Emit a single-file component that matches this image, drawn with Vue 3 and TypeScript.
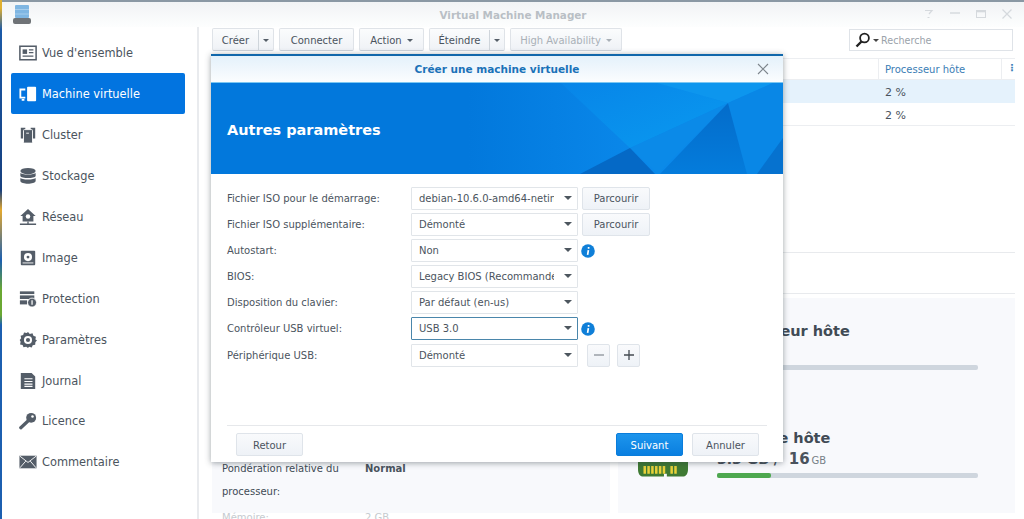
<script setup lang="ts">
const nav = [
  { label: "Vue d'ensemble", icon: 'overview' },
  { label: 'Machine virtuelle', icon: 'vm', active: true },
  { label: 'Cluster', icon: 'cluster' },
  { label: 'Stockage', icon: 'storage' },
  { label: 'Réseau', icon: 'network' },
  { label: 'Image', icon: 'image' },
  { label: 'Protection', icon: 'protection' },
  { label: 'Paramètres', icon: 'settings' },
  { label: 'Journal', icon: 'log' },
  { label: 'Licence', icon: 'license' },
  { label: 'Commentaire', icon: 'feedback' },
]
const fields = [
  { label: 'Fichier ISO pour le démarrage:', value: 'debian-10.6.0-amd64-netinst.iso', extra: 'browse' },
  { label: 'Fichier ISO supplémentaire:', value: 'Démonté', extra: 'browse' },
  { label: 'Autostart:', value: 'Non', extra: 'info' },
  { label: 'BIOS:', value: 'Legacy BIOS (Recommandé)', extra: '' },
  { label: 'Disposition du clavier:', value: 'Par défaut (en-us)', extra: '' },
  { label: 'Contrôleur USB virtuel:', value: 'USB 3.0', extra: 'info', focus: true },
  { label: 'Périphérique USB:', value: 'Démonté', extra: 'pm' },
]
</script>

<template>
  <div class="desk">
    <div class="wall"></div>
    <div class="win">
      <header class="titlebar">
        <svg class="appicon" width="20" height="20" viewBox="0 0 20 20">
          <rect x="3" y="0" width="14" height="13" rx="1" fill="#7fb6e2" />
          <path d="M3 4.5h14M3 9h14" stroke="#a6cdec" />
          <rect x="1" y="13" width="18" height="6" rx="2" fill="#6f7377" />
        </svg>
        <span class="wintitle">Virtual Machine Manager</span>
        <div class="winbtns">
          <svg width="12" height="12" viewBox="0 0 12 12"><path d="M2 2.5h7l-3 3.5M4.5 9.5h2" fill="none" stroke="#d5d9dd" stroke-width="1.2" /></svg>
          <svg width="12" height="12" viewBox="0 0 12 12"><path d="M1 5h10" stroke="#d5d9dd" stroke-width="1.4" /></svg>
          <svg width="12" height="12" viewBox="0 0 12 12"><rect x="1.5" y="2.5" width="9" height="7" fill="none" stroke="#d5d9dd" /><path d="M1.5 3.5h9" stroke="#d5d9dd" stroke-width="1.6" /></svg>
          <svg width="12" height="12" viewBox="0 0 12 12"><path d="M1.5 1.5l9 9M10.5 1.5l-9 9" stroke="#d5d9dd" stroke-width="1.2" /></svg>
        </div>
      </header>
      <div class="body">
        <aside class="side">
          <div v-for="n in nav" :key="n.label" class="navitem" :class="{ active: n.active }">
            <svg class="navicon" width="18" height="18" viewBox="0 0 20 20">
              <g v-if="n.icon === 'overview'">
                <rect x="1" y="2.5" width="18" height="15" fill="none" stroke="currentColor" stroke-width="1.7" />
                <rect x="4" y="6" width="5" height="5" fill="currentColor" />
                <path d="M11 6.5h5M11 9.5h5M4 13.5h12" stroke="currentColor" stroke-width="1.5" />
              </g>
              <g v-else-if="n.icon === 'vm'">
                <rect x="9" y="2" width="10" height="16" rx="1" fill="currentColor" />
                <path d="M7 5H1.5v9H7M3 16.5h3" fill="none" stroke="currentColor" stroke-width="2" />
              </g>
              <g v-else-if="n.icon === 'cluster'">
                <path d="M2 2h5v12H2zM13 2h5v12h-5z" fill="currentColor" />
                <rect x="5" y="4" width="10" height="15" rx="1" fill="currentColor" stroke="#fff" />
                <path d="M8 8h3" stroke="#fff" />
              </g>
              <g v-else-if="n.icon === 'storage'" fill="currentColor">
                <ellipse cx="10" cy="4.5" rx="8.5" ry="3.5" />
                <path d="M1.5 6.5c1 2.6 16 2.6 17 0v3.5c-1 3-16 3-17 0zM1.5 12c1 2.6 16 2.6 17 0v3.5c-1 4-16 4-17 0z" />
              </g>
              <g v-else-if="n.icon === 'network'">
                <path d="M10 1L1.5 9H4v6h12V9h2.5z" fill="currentColor" />
                <circle cx="10" cy="9.5" r="2.5" fill="#fff" />
                <path d="M1 18h18M10 15v3" stroke="currentColor" stroke-width="1.5" />
              </g>
              <g v-else-if="n.icon === 'image'">
                <rect x="2" y="2" width="16" height="16" rx="1" fill="currentColor" />
                <circle cx="10" cy="9" r="4.5" fill="#fff" />
                <circle cx="10" cy="9" r="1.6" fill="currentColor" />
                <path d="M4 15.5h12" stroke="#fff" />
              </g>
              <g v-else-if="n.icon === 'protection'" fill="currentColor">
                <rect x="1" y="1.5" width="16" height="3" />
                <rect x="1" y="6" width="16" height="4" />
                <rect x="1" y="11.5" width="8" height="4.5" />
                <circle cx="14.5" cy="14" r="5" stroke="#fff" />
                <path d="M14.5 11.5v5" stroke="#fff" stroke-width="1.4" />
              </g>
              <g v-else-if="n.icon === 'settings'">
                <path d="M10 1l2 2.2 3-.6 1 2.8 2.8 1-.6 3 1.8 1-1.8 2-.2 2.8-2.8.6-1 2.4-3-.6L10 19l-2-1.6-3 .6-1-2.4-2.8-.6.6-3L.8 10l1.6-2-.6-2.6 2.8-1 1-2.8 3 .6z" fill="currentColor" />
                <circle cx="10" cy="10" r="4.5" fill="#fff" />
                <circle cx="10" cy="10" r="2.3" fill="currentColor" />
              </g>
              <g v-else-if="n.icon === 'log'">
                <path d="M2 1h12l4 4v14H2z" fill="currentColor" />
                <path d="M6 7.5h9M6 10.5h9M6 13.5h9M6 16h9" stroke="#fff" stroke-width="1.2" />
              </g>
              <g v-else-if="n.icon === 'license'">
                <circle cx="13.5" cy="6.5" r="5.5" fill="currentColor" />
                <path d="M10 10L2 17.5" stroke="currentColor" stroke-width="3.6" stroke-linecap="round" />
                <circle cx="15" cy="5" r="1.4" fill="#fff" />
              </g>
              <g v-else>
                <rect x="0.5" y="3" width="19" height="14" fill="currentColor" />
                <path d="M1 3.5l9 7 9-7M1 16.5l6.5-7.5M19 16.5L12.5 9" fill="none" stroke="#fff" />
              </g>
            </svg>
            <span>{{ n.label }}</span>
          </div>
        </aside>

        <main class="main">
          <div class="toolbar">
            <div class="btn split"><span class="part a">Créer</span><span class="part b"><i class="caret"></i></span></div>
            <div class="btn w-connect">Connecter</div>
            <div class="btn w-action">Action <i class="caret"></i></div>
            <div class="btn split"><span class="part c">Éteindre</span><span class="part b"><i class="caret"></i></span></div>
            <div class="btn off">High Availability <i class="caret"></i></div>
            <div class="search">
              <svg width="16" height="16" viewBox="0 0 16 16"><circle cx="9.5" cy="6" r="4.4" fill="none" stroke="#222" stroke-width="1.8" /><path d="M6.5 9.5L1.5 14.5" stroke="#222" stroke-width="2.4" /></svg>
              <i class="caret dark"></i>
              <span>Recherche</span>
            </div>
          </div>

          <div class="grid">
            <div class="ghead"><span class="gcol">Processeur hôte</span><span class="gmore">⋮</span></div>
            <div class="grow sel"><span class="gval">2 %</span></div>
            <div class="grow"><span class="gval">2 %</span></div>
          </div>

          <div class="tabbar"></div>

          <div class="panels">
            <section class="pleft">
              <div class="kv"><span class="k">Pondération relative du processeur:</span><b class="v">Normal</b></div>
              <div class="kv dim"><span class="k">Mémoire:</span><span class="v">2 GB</span></div>
            </section>
            <section class="pright">
              <div class="res first">
                <div class="resinfo">
                  <h3>Processeur hôte</h3>
                  <div class="bar"></div>
                </div>
              </div>
              <div class="res second">
                <svg class="ram" width="50" height="24" viewBox="0 0 52 24">
                  <path d="M0 0h52v14c0 5-2 8-6 8H30v-3h-3v3H6c-4 0-6-3-6-8z" fill="#3f7a33" />
                  <path d="M7 11v8M11 11v8M15 11v8M19 11v8M23 11v8M27 11v8M35 11v8M39 11v8" stroke="#e9d23a" stroke-width="2.6" />
                </svg>
                <div class="resinfo">
                  <h3>Mémoire hôte</h3>
                  <div class="mem"><span class="used">3.3 GB /</span> <b>16</b><small>GB</small></div>
                  <div class="bar"><div class="fill" :style="{ width: '20.7%' }"></div></div>
                </div>
              </div>
            </section>
          </div>
        </main>
      </div>
    </div>

    <div class="modal">
      <div class="mhead">
        <span>Créer une machine virtuelle</span>
        <svg class="mclose" width="12" height="12" viewBox="0 0 12 12"><path d="M1 1l10 10M11 1L1 11" stroke="#7d858c" stroke-width="1.1" /></svg>
      </div>
      <div class="banner">
        <svg class="poly" viewBox="0 0 572 91" width="572" height="91">
          <defs>
            <linearGradient id="base" x1="0" y1="0" x2="1" y2="0">
              <stop offset="0.45" stop-color="#0278dc" />
              <stop offset="0.75" stop-color="#0a88ea" />
            </linearGradient>
            <linearGradient id="mid" x1="0" y1="0" x2="1" y2="1">
              <stop offset="0" stop-color="#0785e8" />
              <stop offset="1" stop-color="#0a9af0" />
            </linearGradient>
            <linearGradient id="dark" x1="0" y1="0" x2="0" y2="1">
              <stop offset="0" stop-color="#046cca" />
              <stop offset="1" stop-color="#047cdc" />
            </linearGradient>
          </defs>
          <rect width="572" height="91" fill="url(#base)" />
          <polygon points="350,0 446,0 517,20 419,65" fill="url(#mid)" />
          <polygon points="446,0 562,0 517,20" fill="#0d96ee" />
          <polygon points="562,0 572,0 572,91 536,91 517,20" fill="#0987e6" />
          <polygon points="572,55 572,91 546,91" fill="#0672cf" />
          <polygon points="419,65 517,20 447,91" fill="#0b8ae8" />
          <polygon points="517,20 449,91 536,91" fill="url(#dark)" />
          <polygon points="369,91 419,65 444,91" fill="#0569c6" />
        </svg>
        <h2>Autres paramètres</h2>
      </div>
      <div class="form">
        <div v-for="f in fields" :key="f.label" class="frow">
          <label>{{ f.label }}</label>
          <div class="select" :class="{ focus: f.focus }">
            <span class="selval">{{ f.value }}</span>
            <i class="caret sel-caret"></i>
          </div>
          <div v-if="f.extra === 'browse'" class="gbtn browse">Parcourir</div>
          <svg v-else-if="f.extra === 'info'" class="info" width="14" height="14" viewBox="0 0 14 14">
            <circle cx="7" cy="7" r="6.8" fill="#0f7fd8" />
            <path d="M7.6 3v1.8M7.4 6.2L6.6 10.8" stroke="#fff" stroke-width="1.7" />
          </svg>
          <div v-else-if="f.extra === 'pm'" class="pm">
            <div class="gbtn sq"><svg width="12" height="12" viewBox="0 0 12 12"><path d="M1 6h10" stroke="#8b9299" stroke-width="1.3" /></svg></div>
            <div class="gbtn sq"><svg width="12" height="12" viewBox="0 0 12 12"><path d="M1 6h10M6 1v10" stroke="#444b52" stroke-width="1.3" /></svg></div>
          </div>
        </div>
      </div>
      <div class="mfoot">
        <div class="gbtn fbtn">Retour</div>
        <div class="spacer"></div>
        <div class="gbtn fbtn primary">Suivant</div>
        <div class="gbtn fbtn">Annuler</div>
      </div>
    </div>
  </div>
</template>

<style>
html, body { margin: 0; padding: 0; background: #fff; overflow: hidden; }
</style>

<style scoped>
.desk {
  position: relative;
  width: 1024px;
  height: 519px;
  overflow: hidden;
  font-family: "DejaVu Sans", sans-serif;
  font-size: 10px;
  color: #414b55;
  display: flex;
  background: #fff;
}
.wall {
  width: 2px;
  flex: none;
  background: linear-gradient(#e0b030 0, #e0b030 8px, #1b5aa8 30px, #163f7e 190px, #e5a92e 210px, #1c5fb0 260px, #6aa832 290px, #6aa832 315px, #1c5fb0 325px, #1c5fb0 519px);
}
.win { flex: 1; display: flex; flex-direction: column; min-width: 0; }
.titlebar {
  height: 27px;
  flex: none;
  position: relative;
  display: flex;
  align-items: center;
  justify-content: center;
  border-top: 2px solid #8a98a4;
  background: linear-gradient(#f1f3f5, #fdfefe);
  box-sizing: border-box;
}
.appicon { position: absolute; left: 10px; top: 3px; }
.wintitle { font-weight: 700; font-size: 10.4px; color: #b9bfc5; }
.winbtns { position: absolute; right: 11px; top: 6px; display: flex; gap: 14px; }
.body { flex: 1; display: flex; min-height: 0; }
.side {
  width: 197px;
  flex: none;
  box-sizing: border-box;
  padding: 5px 0 0 9px;
  border-right: 2px solid #e9ebee;
}
.navitem {
  width: 174px;
  height: 40.9px;
  box-sizing: border-box;
  display: flex;
  align-items: center;
  gap: 5px;
  padding: 2px 0 0 8px;
  border-radius: 2px;
  font-size: 11.4px;
  color: #4b545e;
}
.navitem.active { background: #0274e0; color: #fff; }
.navicon { flex: none; color: #545d68; }
.navitem.active .navicon { color: #fff; }
.main { flex: 1; min-width: 0; display: flex; flex-direction: column; }
.toolbar {
  height: 23px;
  flex: none;
  display: flex;
  gap: 5px;
  padding: 1px 0 0 13px;
  position: relative;
}
.btn {
  height: 23px;
  box-sizing: border-box;
  display: flex;
  align-items: center;
  justify-content: center;
  gap: 5px;
  padding-top: 1px;
  border: 1px solid #dfe3e8;
  border-bottom-color: #cdd3da;
  border-radius: 2px;
  background: linear-gradient(#fbfcfd, #eff2f6);
  font-size: 10px;
  color: #4a535d;
}
.split { gap: 0; }
.part { height: 100%; display: flex; align-items: center; justify-content: center; }
.part.a { width: 45px; border-right: 1px solid #cfd5db; }
.part.c { width: 59px; border-right: 1px solid #cfd5db; }
.part.b { width: 14px; }
.w-connect { width: 75px; }
.w-action { width: 65px; }
.off { width: 112px; color: #a9b0b7; }
.caret {
  display: inline-block;
  width: 0;
  height: 0;
  border-left: 3px solid transparent;
  border-right: 3px solid transparent;
  border-top: 3px solid #555e68;
}
.off .caret { border-top-color: #a9b0b7; }
.search {
  position: absolute;
  left: 650px;
  top: 2px;
  width: 164px;
  height: 22px;
  box-sizing: border-box;
  border: 1px solid #dfe3e8;
  display: flex;
  align-items: center;
  padding-left: 5px;
  gap: 2px;
  color: #9aa2aa;
  font-size: 9.6px;
}
.caret.dark { border-top-color: #444; }
.grid { margin: 7px 9px 0 13px; flex: none; }
.ghead {
  height: 22px;
  box-sizing: border-box;
  display: flex;
  align-items: center;
  border-top: 1px solid #eceef1;
  border-bottom: 1px solid #eceef1;
  position: relative;
  font-size: 10px;
  color: #3a7db5;
}
.gcol {
  position: absolute;
  left: 666px;
  top: 0;
  bottom: 0;
  width: 124px;
  padding-left: 6px;
  box-sizing: border-box;
  display: flex;
  align-items: center;
  border-left: 1px solid #eceef1;
  border-right: 1px solid #eceef1;
}
.gmore { position: absolute; left: 795px; top: 3px; font-weight: 700; color: #3a7db5; }
.grow {
  height: 23px;
  position: relative;
  display: flex;
  align-items: center;
  padding-top: 2px;
  border-bottom: 1px solid #eceef1;
  box-sizing: border-box;
}
.grow.sel { background: #e5f2fc; border-bottom: none; }
.gval { position: absolute; left: 673px; font-size: 11px; color: #4a535d; }
.tabbar {
  height: 40px;
  flex: none;
  margin: 126px 9px 0 13px;
  border-top: 1px solid #e8eaed;
  border-bottom: 1px solid #e8eaed;
}
.panels {
  flex: none;
  height: 215px;
  display: flex;
  gap: 8px;
  margin-top: 4px;
  padding: 0 9px 0 13px;
  background: #fff;
}
.pleft {
  width: 398px;
  flex: none;
  background: #f8f9fc;
  padding: 159px 10px 0 10px;
  box-sizing: border-box;
}
.kv { display: flex; line-height: 23px; margin-bottom: 3px; }
.k { width: 143px; flex: none; }
.v { color: #4a535d; }
.dim { color: #c6cbd0; }
.dim .v { color: #c6cbd0; }
.pright {
  flex: 1;
  background: #f8f9fc;
  position: relative;
}
.res { height: 108px; position: relative; }
.resinfo { position: absolute; left: 99px; top: 0; width: 261px; }
.res h3 { margin: 0; font-size: 14.5px; line-height: 17px; font-weight: 700; color: #414b55; white-space: nowrap; }
.first h3 { margin-top: 25px; }
.first .bar { margin-top: 25px; }
.second h3 { margin-top: 24px; }
.second .ram { position: absolute; left: 20px; top: 49px; }
.mem { height: 16px; line-height: 16px; margin-top: 4px; white-space: nowrap; font-size: 14px; font-weight: 700; color: #4a535d; }
.mem b { font-size: 15px; color: #4a535d; margin-left: 5px; }
.mem small { font-size: 10px; font-weight: 400; color: #777f87; margin-left: 2px; }
.bar { height: 5px; background: #cfd6de; border-radius: 2px; margin-top: 6px; }
.fill { height: 5px; background: #4ea84f; border-radius: 2px; }
.modal {
  position: absolute;
  left: 211px;
  top: 54px;
  width: 572px;
  height: 408px;
  background: #fff;
  display: flex;
  flex-direction: column;
  border-top: 2px solid #1067ab;
  box-sizing: border-box;
  box-shadow: 0 1px 6px rgba(40, 50, 60, 0.45);
}
.mhead {
  height: 27px;
  flex: none;
  box-sizing: border-box;
  border-bottom: 1px solid #7cc7f2;
  display: flex;
  align-items: center;
  justify-content: center;
  position: relative;
  background: linear-gradient(#e4f1fb, #fbfdfe);
  font-weight: 700;
  font-size: 10.5px;
  color: #1a72b8;
}
.mclose { position: absolute; right: 14px; top: 7px; }
.banner { height: 91px; flex: none; position: relative; background: #0278dc; }
.poly { position: absolute; inset: 0; display: block; }
.banner h2 {
  position: absolute;
  left: 16px;
  top: 38px;
  margin: 0;
  font-size: 14.5px;
  line-height: 18px;
  font-weight: 700;
  color: #fff;
}
.form { flex: 1; padding: 13px 0 0 16px; display: flex; flex-direction: column; gap: 3.1px; }
.frow { display: flex; align-items: center; height: 23px; }
.frow label { width: 184px; flex: none; font-size: 10px; color: #4b545e; white-space: nowrap; }
.select {
  width: 167px;
  height: 23px;
  box-sizing: border-box;
  flex: none;
  border: 1px solid #e1e5e9;
  border-radius: 1px;
  display: flex;
  align-items: center;
  padding-left: 7px;
  position: relative;
  background: #fff;
  font-size: 10px;
  color: #4b545e;
}
.select.focus { border-color: #4a86ab; }
.selval { width: 135px; overflow: hidden; white-space: nowrap; }
.sel-caret {
  position: absolute;
  right: 5px;
  top: 8px;
  border-left-width: 4.5px;
  border-right-width: 4.5px;
  border-top-width: 4.5px;
  border-top-color: #4d565f;
}
.gbtn {
  box-sizing: border-box;
  height: 23px;
  display: flex;
  align-items: center;
  justify-content: center;
  border: 1px solid #dfe4ea;
  border-radius: 2px;
  background: linear-gradient(#f9fafc, #eef2f7);
  font-size: 10px;
  color: #4b545e;
}
.browse { width: 68px; margin-left: 4px; }
.info { margin-left: 3px; }
.pm { display: flex; gap: 7px; margin-left: 9px; }
.sq { width: 23px; }
.mfoot {
  height: 37px;
  flex: none;
  box-sizing: border-box;
  margin: 0 16px;
  border-top: 1px solid #e6e8eb;
  display: flex;
  align-items: flex-start;
  padding: 7px 8px 0 9px;
  gap: 9px;
}
.spacer { flex: 1; }
.fbtn { width: 67px; padding-top: 1px; }
.primary {
  background: linear-gradient(#1d95ec, #0a7fe0);
  border-color: #0a7ddb;
  color: #fff;
}
</style>
